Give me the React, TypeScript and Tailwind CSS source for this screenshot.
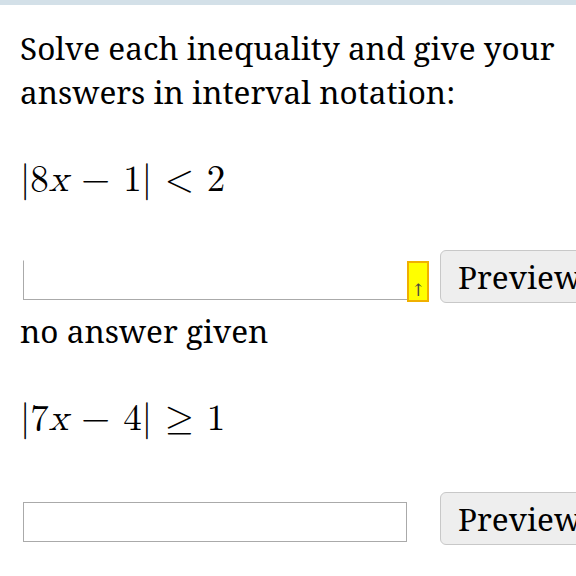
const serif = { fontFamily: '"Noto Serif", "DejaVu Serif", serif' };
const math = { fontFamily: '"Latin Modern Math", "Liberation Serif", serif' };

function MathLine({ a, b, rel, c }: { a: string; b: string; rel: string; c: string }) {
  return (
    <div className="h-[40px] flex items-center text-[37px] leading-none text-black whitespace-nowrap" style={math}>
      <span>|{a}</span>
      <span className="italic">x</span>
      <span className="mx-[13px]">−</span>
      <span>{b}|</span>
      <span className="mx-[13px]">{rel}</span>
      <span>{c}</span>
    </div>
  );
}

function AnswerRow({ marker }: { marker?: boolean }) {
  return (
    <div className="flex items-end">
      <input
        type="text"
        className={
          "shrink-0 w-[384px] h-[40px] ml-[3px] mb-[3px] bg-white border border-[#aaa] outline-none " +
          (marker ? "border-t-transparent border-r-0" : "")
        }
      />
      {marker ? (
        <span className="shrink-0 w-[22px] h-[41px] mb-[1px] bg-[#ffff00] border-2 border-[#f0b000] flex items-end justify-center pb-[2px] text-[17px] leading-none text-[#444]">
          ↑
        </span>
      ) : (
        <span className="shrink-0 w-[22px]" />
      )}
      <button
        className="shrink-0 ml-[11px] h-[53px] px-[17px] rounded-[6px] border border-[#c8c8c8] bg-[#eeeeee] text-[31.5px] text-black whitespace-nowrap"
        style={serif}
      >
        Preview
      </button>
    </div>
  );
}

export default function App() {
  return (
    <div className="w-[576px] h-[576px] overflow-hidden bg-white">
      <div className="h-[5px] bg-[#d3e0e8]" />
      <div className="pl-[20px]" style={serif}>
        <p className="mt-[21px] text-[31.5px] leading-[44px] text-black">
          Solve each inequality and give your answers in interval notation:
        </p>
        <div className="mt-[45px]">
          <MathLine a="8" b="1" rel="<" c="2" />
        </div>
        <div className="mt-[51px]">
          <AnswerRow marker />
        </div>
        <p className="mt-[6px] text-[31.5px] leading-[44px] text-black">no answer given</p>
        <div className="mt-[45px]">
          <MathLine a="7" b="4" rel="≥" c="1" />
        </div>
        <div className="mt-[54px]">
          <AnswerRow />
        </div>
      </div>
    </div>
  );
}
